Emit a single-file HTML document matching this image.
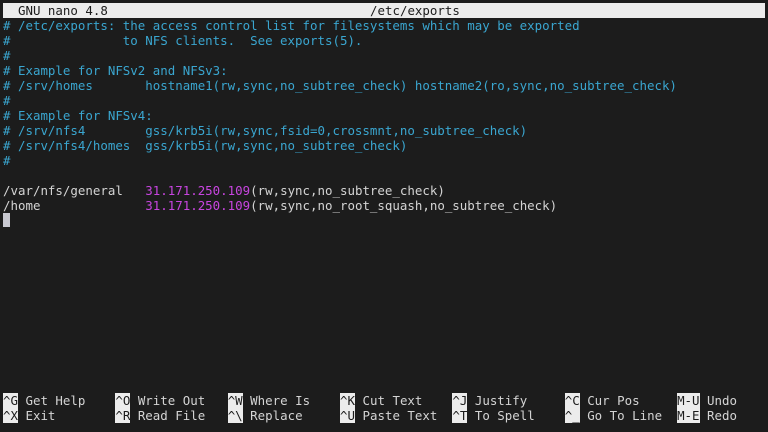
<!DOCTYPE html>
<html><head><meta charset="utf-8"><style>
html,body{margin:0;padding:0;background:#1c1c1c;width:768px;height:432px;overflow:hidden}
.t{position:absolute;left:3px;font-family:"DejaVu Sans Mono","Liberation Mono",monospace;font-size:12.45px;line-height:15px;height:15px;white-space:pre;color:#d4d4d4}
.c{color:#3aa6d0}.m{color:#c845e0}
.bar{position:absolute;left:3px;top:3px;width:762px;height:15px;background:#ececec}
.k{background:#ececec;color:#1c1c1c;display:inline-block;height:15px}
.cur{position:absolute;left:3px;top:213px;width:7px;height:14px;background:#c8c8d0}
</style></head><body>
<div class="bar"></div>
<div class="t" style="top:3px;color:#1c1c1c">  GNU nano 4.8</div>
<div class="t" style="top:3px;left:370px;color:#1c1c1c">/etc/exports</div>
<div class="t c" style="top:18px"># /etc/exports: the access control list for filesystems which may be exported</div>
<div class="t c" style="top:33px">#               to NFS clients.  See exports(5).</div>
<div class="t c" style="top:48px">#</div>
<div class="t c" style="top:63px"># Example for NFSv2 and NFSv3:</div>
<div class="t c" style="top:78px"># /srv/homes       hostname1(rw,sync,no_subtree_check) hostname2(ro,sync,no_subtree_check)</div>
<div class="t c" style="top:93px">#</div>
<div class="t c" style="top:108px"># Example for NFSv4:</div>
<div class="t c" style="top:123px"># /srv/nfs4        gss/krb5i(rw,sync,fsid=0,crossmnt,no_subtree_check)</div>
<div class="t c" style="top:138px"># /srv/nfs4/homes  gss/krb5i(rw,sync,no_subtree_check)</div>
<div class="t c" style="top:153px">#</div>
<div class="t" style="top:183px">/var/nfs/general   <span class="m">31.171.250.109</span>(rw,sync,no_subtree_check)</div>
<div class="t" style="top:198px">/home              <span class="m">31.171.250.109</span>(rw,sync,no_root_squash,no_subtree_check)</div>
<div class="cur"></div>
<div class="t" style="top:393px"><span class="k">^G</span> Get Help    <span class="k">^O</span> Write Out   <span class="k">^W</span> Where Is    <span class="k">^K</span> Cut Text    <span class="k">^J</span> Justify     <span class="k">^C</span> Cur Pos     <span class="k">M-U</span> Undo</div>
<div class="t" style="top:408px"><span class="k">^X</span> Exit        <span class="k">^R</span> Read File   <span class="k">^\</span> Replace     <span class="k">^U</span> Paste Text  <span class="k">^T</span> To Spell    <span class="k">^_</span> Go To Line  <span class="k">M-E</span> Redo</div>
</body></html>
